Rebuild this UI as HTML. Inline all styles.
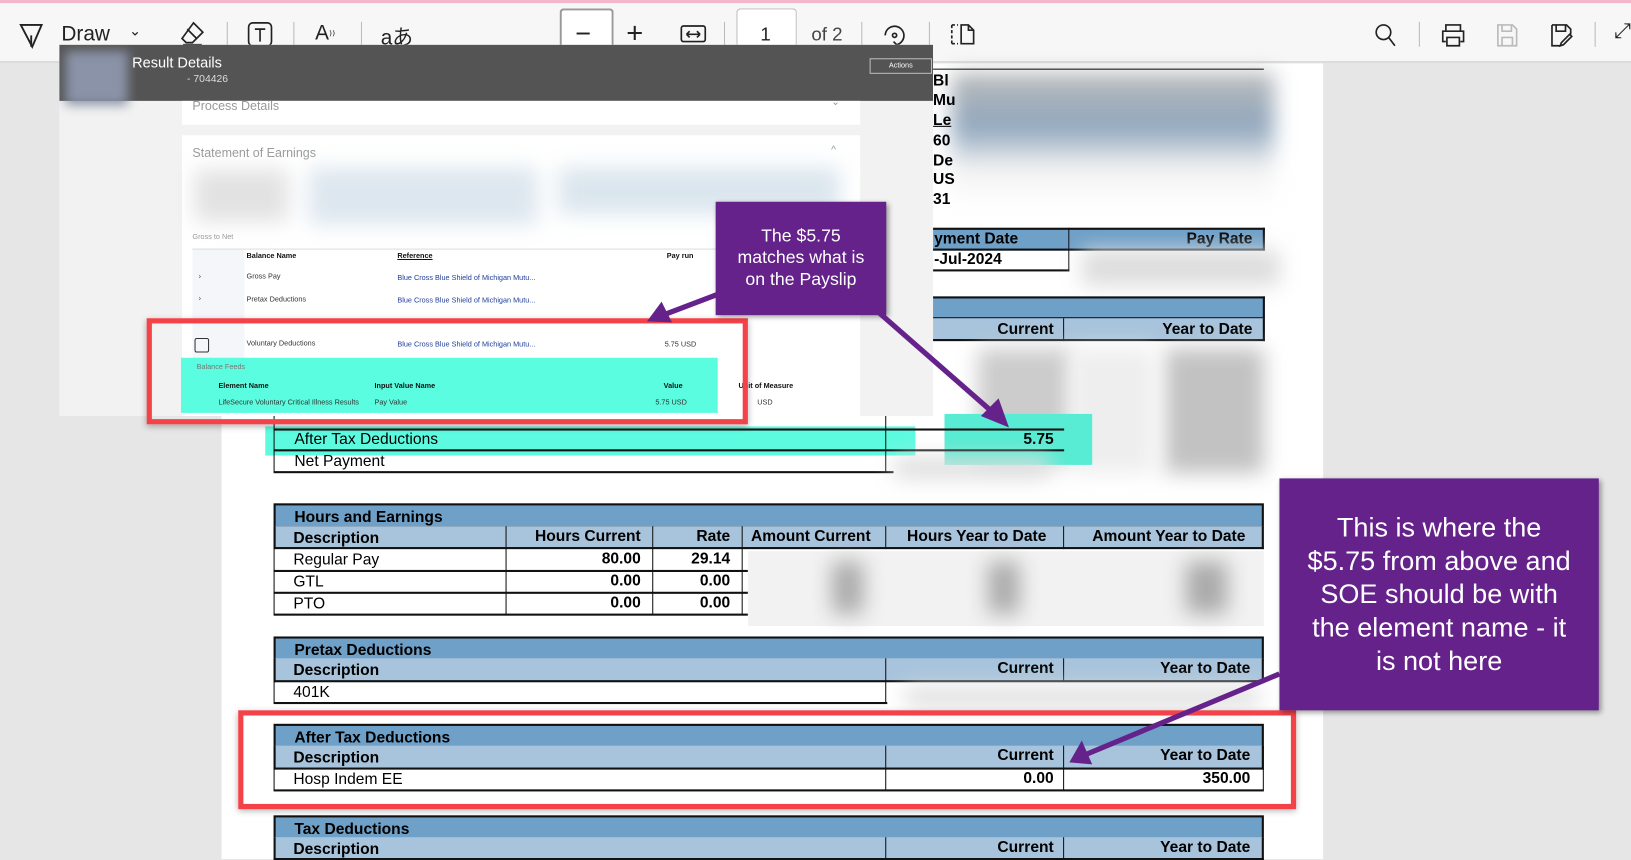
<!DOCTYPE html>
<html><head><meta charset="utf-8"><style>
body{margin:0;width:1631px;height:859px;overflow:hidden;background:#e6e6e6;font-family:"Liberation Sans",sans-serif}
#w{position:absolute;left:0;top:0;width:1568px;height:826px;transform:scale(1.0402,1.04);transform-origin:0 0}
.a{position:absolute}
.tb{left:0;top:0;width:1568px;height:60px;background:#f7f7f7;border-bottom:1px solid #ccc;border-top:3px solid #f4b6cc;box-sizing:border-box}
.t{position:absolute;font-size:20px;color:#222}
.sep{position:absolute;top:18px;width:1px;height:24px;background:#bbb}
.page{left:213px;top:61px;width:1059px;height:765px;background:#fff}
.hdr{position:absolute;background:#6fa0c8;border:2px solid #111;box-sizing:border-box;font-weight:bold;font-size:15px;padding-left:18px;line-height:20px}
.sub{position:absolute;background:#a8c4dc;border-bottom:2px solid #111;box-sizing:border-box;font-weight:bold;font-size:15px;line-height:20px}
.c{position:absolute;font-size:15px;line-height:20px;white-space:nowrap}
.r{text-align:right}
.vl{position:absolute;width:1px;background:#111}
.hl{position:absolute;height:2px;background:#111}
.blur{position:absolute;filter:blur(10px)}
.box{position:absolute;border:5px solid #f44249;box-sizing:border-box;box-shadow:0 2px 6px rgba(0,0,0,.3)}
.pb{position:absolute;background:#64228a;color:#fff;text-align:center;box-shadow:2px 2px 5px rgba(0,0,0,.4)}
.sm{position:absolute;font-size:7px;white-space:nowrap;color:#333}
.lk{color:#1f3f9a}
</style></head><body><div id="w">
<div class="a page"></div>
<div class="a tb">
<svg class="a" style="left:18px;top:18px" width="26" height="26" viewBox="0 0 26 26" fill="none" stroke="#222" stroke-width="1.8"><path d="M2 3h20L13 24zM12 13v11"/></svg>
<div class="t" style="left:59px;top:19px">Draw</div>
<div class="t" style="left:124px;top:18px;font-size:14px">⌄</div>
<svg class="a" style="left:172px;top:16px" width="26" height="26" viewBox="0 0 26 26" fill="none" stroke="#222" stroke-width="1.6"><path d="M14 3l9 9-10 10H7L3 18z M8 9l9 9 M4 24h18"/></svg>
<div class="sep" style="left:218px"></div>
<svg class="a" style="left:237px;top:17px" width="26" height="26" viewBox="0 0 26 26" fill="none" stroke="#222" stroke-width="1.6"><rect x="2" y="2" width="22" height="22" rx="4"/><path d="M8 8h10M13 8v12"/></svg>
<div class="sep" style="left:282px"></div>
<div class="t" style="left:303px;top:18px">A<span style="font-size:12px">⁾⁾</span></div>
<div class="sep" style="left:347px"></div>
<div class="t" style="left:366px;top:17px">aあ</div>
<div class="a" style="left:538px;top:5px;width:48px;height:55px;border:2px solid #999;border-bottom:none;border-radius:4px 4px 0 0;background:#fff"></div>
<div class="t" style="left:553px;top:14px;font-size:26px">−</div>
<div class="t" style="left:602px;top:13px;font-size:28px;font-weight:200">+</div>
<svg class="a" style="left:654px;top:20px" width="26" height="20" viewBox="0 0 26 20" fill="none" stroke="#222" stroke-width="1.6"><rect x="1" y="2" width="23" height="15" rx="2"/><path d="M6 10h13M6 10l3-3M6 10l3 3M19 10l-3-3M19 10l-3 3"/></svg>
<div class="sep" style="left:696px"></div>
<div class="a" style="left:708px;top:5px;width:56px;height:55px;border:1px solid #bbb;border-bottom:none;border-radius:4px 4px 0 0;background:#fff"></div>
<div class="t" style="left:731px;top:20px;font-size:18px">1</div>
<div class="t" style="left:780px;top:20px;font-size:18px;color:#444">of 2</div>
<div class="sep" style="left:828px"></div>
<svg class="a" style="left:847px;top:17px" width="26" height="28" viewBox="0 0 26 28" fill="none" stroke="#222" stroke-width="1.6"><path d="M4 14a9 9 0 1 1 11 9M15 23l-3 3M15 23l-3-3"/><circle cx="13" cy="14" r="2"/></svg>
<div class="sep" style="left:893px"></div>
<svg class="a" style="left:912px;top:18px" width="26" height="24" viewBox="0 0 26 24" fill="none" stroke="#222" stroke-width="1.6"><path d="M3 3h6M3 21h6M3 3v18" stroke-dasharray="3 2"/><path d="M12 3h7l5 5v13H12zM19 3v5h5"/></svg>
<svg class="a" style="left:1320px;top:18px" width="24" height="26" viewBox="0 0 24 26" fill="none" stroke="#222" stroke-width="1.6"><circle cx="10" cy="10" r="7"/><path d="M15 15l6 8"/></svg>
<div class="sep" style="left:1364px"></div>
<svg class="a" style="left:1384px;top:18px" width="26" height="26" viewBox="0 0 26 26" fill="none" stroke="#222" stroke-width="1.6"><path d="M6 9V3h14v6M6 19H3V9h20v10h-3M7 15h12v8H7z"/></svg>
<svg class="a" style="left:1437px;top:18px" width="24" height="26" viewBox="0 0 24 26" fill="none" stroke="#bbb" stroke-width="1.6"><path d="M3 3h14l4 4v16H3zM7 3v6h9V3M7 23v-8h10v8"/></svg>
<svg class="a" style="left:1489px;top:18px" width="26" height="26" viewBox="0 0 26 26" fill="none" stroke="#222" stroke-width="1.6"><path d="M3 3h14l4 4v5M3 3v20h8M7 3v6h9V3M22 14l-8 8-3 1 1-3 8-8z"/></svg>
<div class="sep" style="left:1533px"></div>
<div class="t" style="left:1552px;top:16px">⤢</div>
</div>

<!-- top right blurred region -->
<div class="blur" style="left:915px;top:70px;width:310px;height:130px;background:linear-gradient(#bbb,#8fa6bd 40%,#f2f2f2 70%,#fff)"></div>
<div class="hl" style="left:897px;top:66px;width:318px;height:1px"></div>
<div class="c" style="left:897px;top:68px;font-weight:bold">Bl</div>
<div class="c" style="left:897px;top:87px;font-weight:bold">Mu</div>
<div class="c" style="left:897px;top:106px;font-weight:bold;text-decoration:underline">Le</div>
<div class="c" style="left:897px;top:126px;font-weight:bold">60</div>
<div class="c" style="left:897px;top:145px;font-weight:bold">De</div>
<div class="c" style="left:897px;top:163px;font-weight:bold">US</div>
<div class="c" style="left:897px;top:182px;font-weight:bold">31</div>
<!-- payment date -->
<div class="hdr" style="left:890px;top:219px;width:326px;height:22px;border-left:none;padding:0"></div>
<div class="c" style="left:898px;top:220px;font-weight:bold">yment Date</div>
<div class="c r" style="left:1030px;top:220px;width:174px;font-weight:bold">Pay Rate</div>
<div class="vl" style="left:1027px;top:219px;height:42px"></div>
<div class="c" style="left:898px;top:240px;font-weight:bold">-Jul-2024</div>
<div class="hl" style="left:897px;top:259px;width:131px"></div>
<div class="blur" style="left:1040px;top:240px;width:190px;height:35px;background:#ddd"></div>
<!-- summary -->
<div class="hdr" style="left:890px;top:285px;width:326px;height:22px;border-left:none"></div>
<div class="sub" style="left:890px;top:306px;width:326px;height:22px;border-right:2px solid #111"></div>
<div class="c r" style="left:860px;top:307px;width:153px;font-weight:bold">Current</div>
<div class="c r" style="left:1030px;top:307px;width:174px;font-weight:bold">Year to Date</div>
<div class="vl" style="left:1022px;top:306px;height:22px"></div>
<div class="blur" style="left:940px;top:335px;width:90px;height:110px;background:#ccc"></div>
<div class="blur" style="left:1120px;top:335px;width:95px;height:120px;background:#c2c2c2"></div>
<div class="blur" style="left:1030px;top:335px;width:80px;height:120px;background:#eee"></div>

<!-- After tax / net payment rows -->
<div class="a" style="left:255px;top:410px;width:625px;height:28px;background:#5cfbe0"></div>
<div class="a" style="left:908px;top:398px;width:142px;height:49px;background:#57ecd3"></div>
<div class="hl" style="left:263px;top:412px;width:760px"></div>
<div class="hl" style="left:263px;top:432px;width:760px"></div>
<div class="hl" style="left:263px;top:453px;width:596px"></div>
<div class="vl" style="left:263px;top:400px;height:54px"></div>
<div class="vl" style="left:851px;top:400px;height:54px"></div>
<div class="c" style="left:283px;top:413px">After Tax Deductions</div>
<div class="c r" style="left:900px;top:413px;width:113px;font-weight:bold">5.75</div>
<div class="c" style="left:283px;top:434px">Net Payment</div>
<div class="blur" style="left:860px;top:440px;width:150px;height:20px;background:#ddd"></div>

<!-- Hours and earnings -->
<div class="hdr" style="left:263px;top:484px;width:952px;height:24px;padding-top:2px">Hours and Earnings</div>
<div class="sub" style="left:263px;top:506px;width:952px;height:22px;border-left:2px solid #111;border-right:2px solid #111"></div>
<div class="c" style="left:282px;top:508px;font-weight:bold">Description</div>
<div class="c r" style="left:490px;top:506px;width:126px;font-weight:bold">Hours Current</div>
<div class="c r" style="left:630px;top:506px;width:72px;font-weight:bold">Rate</div>
<div class="c" style="left:722px;top:506px;font-weight:bold">Amount Current</div>
<div class="c" style="left:872px;top:506px;font-weight:bold">Hours Year to Date</div>
<div class="c" style="left:1050px;top:506px;font-weight:bold">Amount Year to Date</div>
<div class="vl" style="left:486px;top:506px;height:85px"></div>
<div class="vl" style="left:627px;top:506px;height:85px"></div>
<div class="vl" style="left:713px;top:506px;height:85px"></div>
<div class="vl" style="left:851px;top:506px;height:22px"></div>
<div class="vl" style="left:1022px;top:506px;height:22px"></div>
<div class="vl" style="left:263px;top:506px;height:85px"></div>
<div class="hl" style="left:263px;top:548px;width:456px"></div>
<div class="hl" style="left:263px;top:569px;width:456px"></div>
<div class="hl" style="left:263px;top:590px;width:456px"></div>
<div class="c" style="left:282px;top:529px">Regular Pay</div>
<div class="c r" style="left:490px;top:528px;width:126px;font-weight:bold">80.00</div>
<div class="c r" style="left:630px;top:528px;width:72px;font-weight:bold">29.14</div>
<div class="c" style="left:282px;top:550px">GTL</div>
<div class="c r" style="left:490px;top:549px;width:126px;font-weight:bold">0.00</div>
<div class="c r" style="left:630px;top:549px;width:72px;font-weight:bold">0.00</div>
<div class="c" style="left:282px;top:571px">PTO</div>
<div class="c r" style="left:490px;top:570px;width:126px;font-weight:bold">0.00</div>
<div class="c r" style="left:630px;top:570px;width:72px;font-weight:bold">0.00</div>
<div class="a" style="left:719px;top:530px;width:496px;height:72px;background:#f2f2f2"></div>
<div class="blur" style="left:800px;top:540px;width:30px;height:50px;background:#aaa"></div>
<div class="blur" style="left:950px;top:540px;width:30px;height:50px;background:#aaa"></div>
<div class="blur" style="left:1140px;top:540px;width:40px;height:50px;background:#aaa"></div>

<!-- Pretax -->
<div class="hdr" style="left:263px;top:612px;width:952px;height:24px;padding-top:2px">Pretax Deductions</div>
<div class="sub" style="left:263px;top:633px;width:952px;height:23px;border-left:2px solid #111;border-right:2px solid #111"></div>
<div class="c" style="left:282px;top:635px;font-weight:bold">Description</div>
<div class="c r" style="left:860px;top:633px;width:153px;font-weight:bold">Current</div>
<div class="c r" style="left:1030px;top:633px;width:172px;font-weight:bold">Year to Date</div>
<div class="vl" style="left:851px;top:633px;height:43px"></div>
<div class="vl" style="left:1022px;top:633px;height:22px"></div>
<div class="vl" style="left:263px;top:633px;height:43px"></div>
<div class="hl" style="left:263px;top:675px;width:590px"></div>
<div class="c" style="left:282px;top:656px">401K</div>
<div class="blur" style="left:870px;top:660px;width:340px;height:20px;background:#e0e0e0"></div>

<!-- After tax -->
<div class="hdr" style="left:263px;top:696px;width:952px;height:24px;padding-top:2px">After Tax Deductions</div>
<div class="sub" style="left:263px;top:717px;width:952px;height:23px;border-left:2px solid #111;border-right:2px solid #111"></div>
<div class="c" style="left:282px;top:719px;font-weight:bold">Description</div>
<div class="c r" style="left:860px;top:717px;width:153px;font-weight:bold">Current</div>
<div class="c r" style="left:1030px;top:717px;width:172px;font-weight:bold">Year to Date</div>
<div class="vl" style="left:851px;top:717px;height:43px"></div>
<div class="vl" style="left:1022px;top:717px;height:43px"></div>
<div class="vl" style="left:263px;top:717px;height:43px"></div>
<div class="vl" style="left:1214px;top:717px;height:43px"></div>
<div class="hl" style="left:263px;top:759px;width:952px"></div>
<div class="c" style="left:282px;top:740px">Hosp Indem EE</div>
<div class="c r" style="left:860px;top:739px;width:153px;font-weight:bold">0.00</div>
<div class="c r" style="left:1030px;top:739px;width:172px;font-weight:bold">350.00</div>

<!-- Tax -->
<div class="hdr" style="left:263px;top:784px;width:952px;height:24px;padding-top:2px">Tax Deductions</div>
<div class="sub" style="left:263px;top:805px;width:952px;height:22px;border-left:2px solid #111;border-right:2px solid #111"></div>
<div class="c" style="left:282px;top:807px;font-weight:bold">Description</div>
<div class="c r" style="left:860px;top:805px;width:153px;font-weight:bold">Current</div>
<div class="c r" style="left:1030px;top:805px;width:172px;font-weight:bold">Year to Date</div>
<div class="vl" style="left:851px;top:805px;height:22px"></div>
<div class="vl" style="left:1022px;top:805px;height:22px"></div>

<!-- overlay panel -->
<div class="a" style="left:57px;top:43px;width:840px;height:357px;background:#f2f2f2;overflow:hidden">
 <div class="a" style="left:0;top:0;width:840px;height:54px;background:#545454"></div>
 <div class="blur" style="left:6px;top:6px;width:60px;height:52px;background:#8a93a8;filter:blur(5px)"></div>
 <div class="a" style="left:70px;top:9px;color:#fff;font-size:14px">Result Details</div>
 <div class="a" style="left:70px;top:28px;color:#ddd;font-size:10px">&nbsp;&nbsp;&nbsp;&nbsp;&nbsp;&nbsp;&nbsp;&nbsp;&nbsp;&nbsp;&nbsp;&nbsp;&nbsp;&nbsp;&nbsp;&nbsp;&nbsp;&nbsp;&nbsp;- 704426</div>
 <div class="a" style="left:779px;top:13px;width:58px;height:13px;border:1px solid #bbb;color:#fff;font-size:7px;text-align:center;line-height:13px">Actions</div>
 <div class="a" style="left:118px;top:54px;width:652px;height:23px;background:#fff"></div>
 <div class="a" style="left:128px;top:52px;font-size:12px;color:#999">Process Details</div>
 <div class="a" style="left:742px;top:50px;font-size:10px;color:#999">⌄</div>
 <div class="a" style="left:118px;top:87px;width:652px;height:270px;background:#fff"></div>
 <div class="a" style="left:128px;top:97px;font-size:12px;color:#999">Statement of Earnings</div>
 <div class="a" style="left:742px;top:96px;font-size:10px;color:#999">^</div>
 <div class="blur" style="left:130px;top:120px;width:90px;height:50px;background:#e2e2e2"></div>
 <div class="blur" style="left:240px;top:118px;width:220px;height:55px;background:#dde7ef"></div>
 <div class="blur" style="left:480px;top:118px;width:270px;height:45px;background:#dbe6ee"></div>
 <div class="sm" style="left:128px;top:182px;color:#999">Gross to Net</div>
 <div class="a" style="left:128px;top:196px;width:50px;height:157px;background:#f4f6f9"></div>
 <div class="hl" style="left:128px;top:196px;width:600px;height:1px;background:#ddd"></div>
 <div class="sm" style="left:180px;top:200px;font-weight:bold;color:#111">Balance Name</div>
 <div class="sm" style="left:325px;top:200px;font-weight:bold;color:#111;text-decoration:underline">Reference</div>
 <div class="sm" style="left:584px;top:200px;font-weight:bold;color:#111">Pay run</div>
 <div class="sm" style="left:134px;top:220px">›</div><div class="sm" style="left:180px;top:220px">Gross Pay</div><div class="sm lk" style="left:325px;top:221px">Blue Cross Blue Shield of Michigan Mutu...</div>
 <div class="sm" style="left:134px;top:241px">›</div><div class="sm" style="left:180px;top:242px">Pretax Deductions</div><div class="sm lk" style="left:325px;top:243px">Blue Cross Blue Shield of Michigan Mutu...</div>
 <div class="a" style="left:130px;top:282px;width:12px;height:12px;border:1px solid #333;border-radius:2px"></div>
 <div class="sm" style="left:180px;top:284px">Voluntary Deductions</div><div class="sm lk" style="left:325px;top:285px">Blue Cross Blue Shield of Michigan Mutu...</div>
 <div class="sm" style="left:582px;top:285px">5.75 USD</div>
 <div class="a" style="left:117px;top:301px;width:516px;height:53px;background:#5bfde0"></div>
 <div class="sm" style="left:132px;top:307px;color:#777">Balance Feeds</div>
 <div class="sm" style="left:153px;top:325px;font-weight:bold;color:#111">Element Name</div>
 <div class="sm" style="left:303px;top:325px;font-weight:bold;color:#111">Input Value Name</div>
 <div class="sm" style="left:581px;top:325px;font-weight:bold;color:#111">Value</div>
 <div class="sm" style="left:653px;top:325px;font-weight:bold;color:#111">Unit of Measure</div>
 <div class="sm" style="left:153px;top:341px">LifeSecure Voluntary Critical Illness Results</div>
 <div class="sm" style="left:303px;top:341px">Pay Value</div>
 <div class="sm" style="left:573px;top:341px">5.75 USD</div>
 <div class="sm" style="left:671px;top:341px">USD</div>
</div>

<div class="box" style="left:141px;top:306px;width:578px;height:102px"></div>
<div class="box" style="left:229px;top:683px;width:1017px;height:95px"></div>

<div class="pb" style="left:688px;top:194px;width:164px;height:109px;font-size:17px;line-height:21px;padding-top:22px;box-sizing:border-box">The $5.75<br>matches what is<br>on the Payslip</div>
<div class="pb" style="left:1230px;top:460px;width:307px;height:223px;font-size:26px;line-height:32px;padding-top:31px;box-sizing:border-box">This is where the<br>$5.75 from above and<br>SOE should be with<br>the element name - it<br>is not here</div>

<svg class="a" style="left:0;top:0" width="1568" height="826">
<g stroke="#64228a" stroke-width="5" fill="#64228a">
<line x1="690" y1="283" x2="640" y2="302"/><polygon points="622,309 636,290 646,310" stroke="none"/>
<line x1="842" y1="298" x2="955" y2="397"/><polygon points="970,411 943,400 960,383" stroke="none"/>
<line x1="1230" y1="648" x2="1045" y2="725"/><polygon points="1028,733 1040,712 1050,735" stroke="none"/>
</g></svg>
</div></body></html>
